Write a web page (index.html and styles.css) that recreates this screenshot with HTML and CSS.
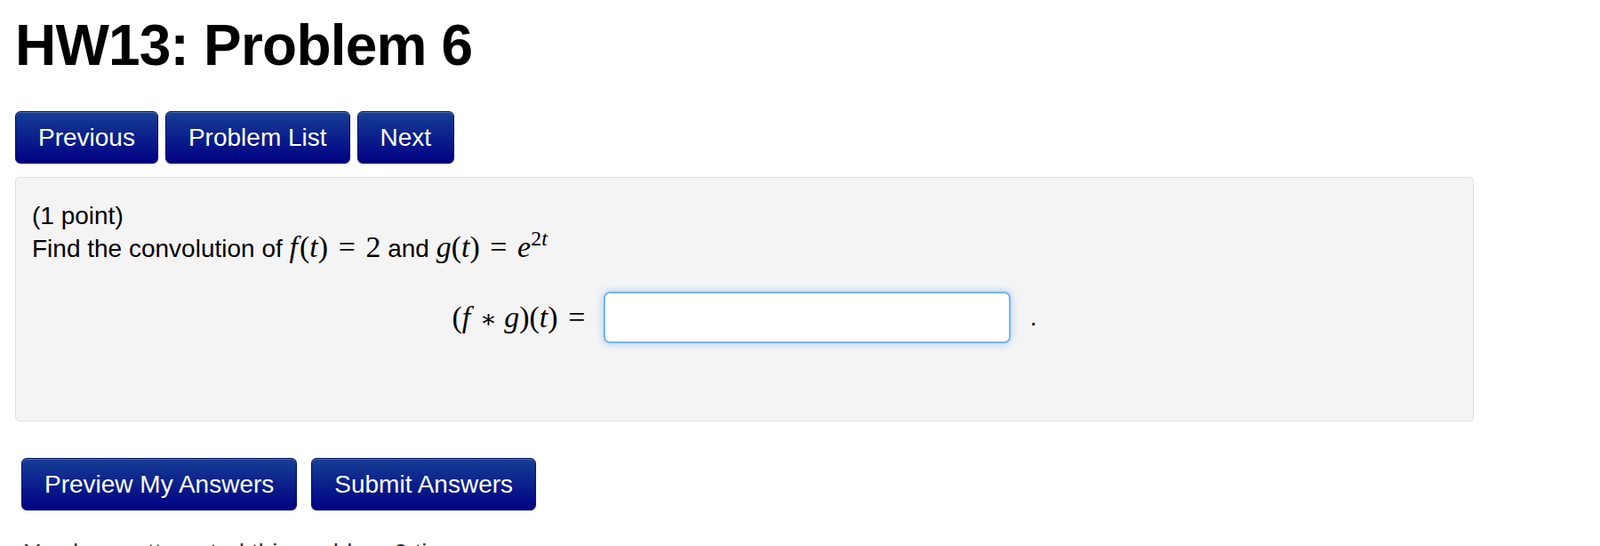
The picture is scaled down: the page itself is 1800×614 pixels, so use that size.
FILE: index.html
```html
<!DOCTYPE html>
<html lang="en">
  <head>
    <meta charset="UTF-8" />
    <meta name="viewport" content="width=device-width, initial-scale=1.0" />
    <title>HW13: Problem 6</title>
    <link rel="stylesheet" href="styles.css">
  </head>
  <body>
    <main class="page">
      <h1 class="title">HW13: Problem 6</h1>

      <!-- Problem navigation -->
      <nav class="nav">
        <a class="btn" href="#">Previous</a>
        <a class="btn" href="#">Problem List</a>
        <a class="btn" href="#">Next</a>
      </nav>

      <!-- Problem body -->
      <div class="problem">
        <div class="line">(1 point)</div>
        <div class="line">
          Find the convolution of
          <span class="math"><i class="fi">f</i>(<i>t</i>)<span class="rel">=</span>2</span>
          and
          <span class="math"><i>g</i>(<i>t</i>)<span class="rel">=</span><i>e</i><sup class="sup">2<i>t</i></sup></span>
        </div>
        <div class="display">
          <span class="math">(<i class="fi">f</i><span class="op">∗</span><i>g</i>)(<i>t</i>)<span class="rel">=</span></span>
          <input class="answer" type="text" name="AnSwEr0001" />
          <span class="dot">.</span>
        </div>
      </div>

      <div class="actions">
        <input type="button" class="btn" value="Preview My Answers" />
        <input type="button" class="btn" value="Submit Answers" />
      </div>

      <p class="note">You have attempted this problem 0 times.</p>
    </main>
  </body>
</html>
```

FILE: styles.css
```css
body {
  margin: 0;
  font-family: "Liberation Sans", Arial, sans-serif;
  font-size: 28px;
  color: #000;
  background: #fff;
}
.page {
  width: 1641px;
  padding: 15px 17px;
}
.title {
  margin: 0 0 38px;
  font-size: 64px;
  line-height: 72px;
  letter-spacing: -0.8px;
  font-weight: bold;
}
.nav {
  display: flex;
  column-gap: 8px;
}
.btn {
  display: inline-block;
  box-sizing: border-box;
  height: 59px;
  padding: 9px 25px;
  border: 1px solid #00105a;
  border-radius: 6px;
  background: linear-gradient(#163f96, #000082);
  box-shadow: inset 0 1px 0 rgba(255, 255, 255, 0.25), 0 1px 2px rgba(0, 0, 0, 0.15);
  color: #fff;
  font-family: "Liberation Sans", Arial, sans-serif;
  font-size: 28px;
  line-height: 39px;
  text-decoration: none;
  text-shadow: 0 -1px 0 rgba(0, 0, 0, 0.25);
}
.problem {
  margin-top: 15px;
  padding: 25px 18px;
  border: 1px solid #e0e0e0;
  border-radius: 5px;
  background-color: #f4f4f4;
}
.line {
  line-height: 36px;
}
.math {
  font-family: "Liberation Serif", "Times New Roman", serif;
  font-size: 34px;
  line-height: 1;
}
.math i {
  font-style: italic;
}
.fi {
  margin-right: 0.06em;
}
.rel {
  margin: 0 0.34em;
}
.op {
  margin: 0 0.3em;
  font-family: "DejaVu Serif", serif;
  font-size: 28px;
}
.sup {
  font-size: 24px;
  line-height: 0;
  vertical-align: 13px;
}
.display {
  display: flex;
  justify-content: center;
  align-items: center;
  margin: 30px 0 62px;
}
.display .rel {
  margin-right: 0.6em;
}
.answer {
  box-sizing: border-box;
  width: 458px;
  height: 58px;
  border: 2px solid #79b3ef;
  border-radius: 7px;
  background: #fff;
  box-shadow: 0 0 8px rgba(82, 168, 236, 0.55);
  outline: none;
}
.dot {
  margin-left: 22px;
}
.actions {
  display: flex;
  column-gap: 16px;
  margin: 41px 0 0 7px;
}
.note {
  margin: 30px 0 0 10px;
  line-height: 36px;
  color: #333;
}
```
